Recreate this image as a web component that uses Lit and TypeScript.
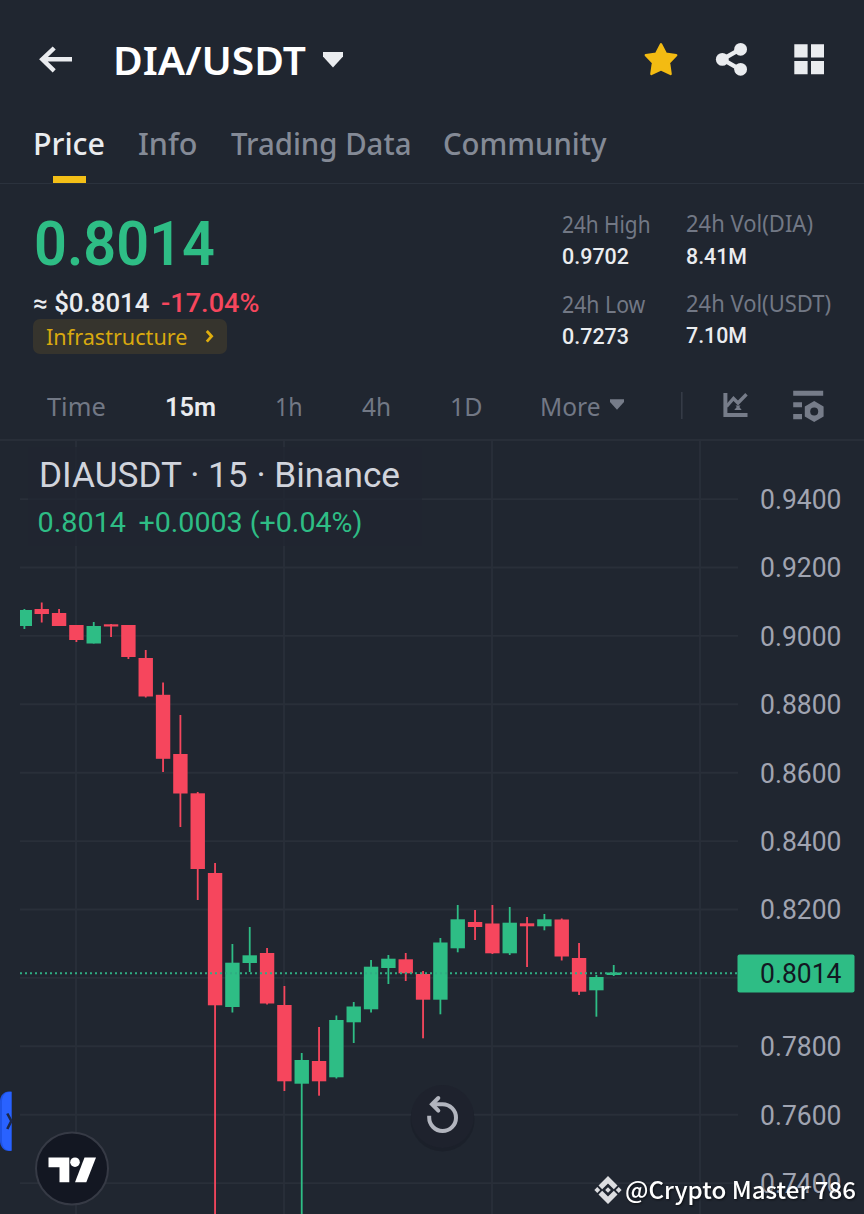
import { LitElement, html, svg, css } from "lit";
import { customElement, property } from "lit/decorators.js";

/* One line of text set to an exact advance width on a given baseline. */
@customElement("fit-label")
class FitLabel extends LitElement {
  @property() text = "";
  @property({ type: Number }) width = 0;
  @property({ type: Number }) height = 0;
  @property({ type: Number }) baseline = 0;

  static styles = css`
    :host { display: block; }
    svg { display: block; overflow: visible; }
    text { fill: currentColor; white-space: pre; }
  `;

  render() {
    return html`<svg width=${this.width} height=${this.height}>
      <text x="0" y=${this.baseline} textLength=${this.width} lengthAdjust="spacingAndGlyphs">${this.text}</text>
    </svg>`;
  }
}

const label = (cls: string, text: string, width: number, height: number, baseline: number) =>
  html`<fit-label class=${cls} .text=${text} .width=${width} .height=${height} .baseline=${baseline}></fit-label>`;

/* body top, body bottom, wick top, wick bottom, rising */
type Candle = [number, number, number, number, 0 | 1];
const CANDLES: Candle[] = [
  [610, 626, 609, 629, 1], [609, 614, 602.5, 622.5, 0], [613, 626, 609, 626, 0],
  [625, 640, 625, 642, 0], [626, 643.5, 622, 643.5, 1], [624.3, 626.5, 624, 637, 0],
  [625, 657, 625, 659, 0], [658, 696.5, 650, 697.5, 0], [694.8, 758.8, 682.5, 772, 0],
  [754, 793.5, 715, 827, 0], [793.3, 869, 792, 900, 0], [873, 1005.3, 863, 1214, 0],
  [962.7, 1007, 944, 1012.5, 1], [955.3, 963, 927, 972, 1], [953, 1003.5, 948, 1004.5, 0],
  [1005, 1081.3, 986, 1091, 0], [1060, 1083.7, 1053, 1214, 1], [1061, 1081.3, 1027, 1095.7, 0],
  [1020, 1077.3, 1015.5, 1078.5, 1], [1006.5, 1022.3, 1002, 1043, 1], [966.7, 1009.3, 960, 1012.5, 1],
  [958.7, 968, 955, 984, 1], [959.3, 973.3, 953, 981, 0], [974, 999.7, 971, 1038.3, 0],
  [942.5, 999.7, 938, 1014.3, 1], [919.3, 948.3, 905, 952.3, 1], [922, 927, 910, 940, 0],
  [923.5, 953.3, 905, 954, 0], [922.7, 953.3, 907, 955, 1], [923.3, 926.3, 917, 967, 0],
  [919.3, 926.3, 914, 930.3, 1], [919.5, 956.5, 918.5, 960.5, 0], [958, 991.7, 943, 995, 0],
  [977, 990.3, 975, 1016.7, 1], [972.5, 975, 965, 976, 1],
];
const STEP = 17.333;
const FIRST_X = 24.4;
const GRID_TOP = 499.1;
const GRID_STEP = 68.4;
const VERTICALS = [76, 284, 492, 700];
const PRICES = ["0.9400", "0.9200", "0.9000", "0.8800", "0.8600", "0.8400", "0.8200", "", "0.7800", "0.7600", "0.7400"];

@customElement("price-chart")
class PriceChart extends LitElement {
  static styles = css`
    :host { display: block; }
    svg { display: block; }
    text { font-family: Roboto, sans-serif; white-space: pre; }
    .grid { stroke: #292f39; stroke-width: 1.9; }
    .legend-bg { fill: #202630; opacity: 0.72; }
    .up { fill: #2ebd85; }
    .down { fill: #f6465d; }
    .last { stroke: #2fae82; stroke-width: 2; stroke-dasharray: 2 3; }
    .axis { font-size: 27px; fill: #a0a4b1; }
    .symbol { font-size: 35.5px; fill: #d1d4dc; }
    .change { font-size: 27.4px; fill: #2ebd85; }
    .tag { fill: #2ebd85; }
    .tag-text { font-size: 27px; fill: #131722; }
    .tv { fill: #131722; stroke: #363a45; stroke-width: 2; }
    .white { fill: #fff; }
    .reset-shadow { fill: #161a24; opacity: 0.45; }
    .reset { fill: #1e222d; }
    .reset-icon { fill: none; stroke: #b2b5be; stroke-width: 4; }
    .round { stroke-linecap: round; }
    .handle { fill: #2962ff; }
    .handle-edge { fill: #1e53e5; }
    .handle-icon { fill: none; stroke: #1c2748; stroke-width: 2.6; }
    .mark { fill: #dcdde0; }
    .watermark { font-family: "Noto Sans CJK SC", sans-serif; font-weight: 500; font-size: 23.6px; fill: #fff; filter: drop-shadow(1px 1px 1px rgba(0, 0, 0, 0.6)); }
  `;

  private candle([top, bottom, high, low, rising]: Candle, i: number) {
    const x = FIRST_X + i * STEP;
    const left = i === 0 ? 20 : x - 7.2;
    return svg`<g class=${rising ? "up" : "down"}>
      <rect x=${x - 0.9} y=${high} width="1.8" height=${low - high}></rect>
      <rect x=${left} y=${top} width=${x + 7.2 + (i === 0 ? 0.4 : 0) - left} height=${bottom - top}></rect>
    </g>`;
  }

  render() {
    return html`<svg width="864" height="775" viewBox="0 439 864 775">
      ${PRICES.map((_, i) => svg`<line class="grid" x1="20" x2="738" y1=${GRID_TOP + i * GRID_STEP} y2=${GRID_TOP + i * GRID_STEP}></line>`)}
      ${VERTICALS.map((x) => svg`<line class="grid" x1=${x} x2=${x} y1="439" y2="1214"></line>`)}
      <rect class="legend-bg" x="28" y="447" width="394" height="99"></rect>
      ${CANDLES.map((c, i) => this.candle(c, i))}
      <line class="last" x1="20" x2="738" y1="973.2" y2="973.2"></line>

      <text class="symbol" x="39" y="487.2" textLength="361" lengthAdjust="spacingAndGlyphs">DIAUSDT · 15 · Binance</text>
      <text class="change" x="37.5" y="532.3" textLength="88.5" lengthAdjust="spacingAndGlyphs">0.8014</text>
      <text class="change" x="138.5" y="532.3" textLength="224" lengthAdjust="spacingAndGlyphs">+0.0003 (+0.04%)</text>

      ${PRICES.map((p, i) => p
        ? svg`<text class="axis" x="760" y=${509 + i * GRID_STEP} textLength="81.5" lengthAdjust="spacingAndGlyphs">${p}</text>`
        : "")}
      <rect class="tag" x="737.5" y="954.5" width="117" height="38" rx="2"></rect>
      <text class="tag-text" x="760" y="983.2" textLength="81.5" lengthAdjust="spacingAndGlyphs">0.8014</text>

      <circle class="reset-shadow" cx="442.5" cy="1119.5" r="32"></circle>
      <circle class="reset" cx="442.5" cy="1116.5" r="31.5"></circle>
      <path class="reset-icon" d="M429.2 1115.8V1117.5A13.4 13.4 0 1 0 442.6 1104.2H434"></path>
      <path class="reset-icon round" d="M438.3 1098L432 1104.2L438.3 1110.6"></path>

      <circle class="tv" cx="72" cy="1168.5" r="36"></circle>
      <path class="white" d="M48.5 1157.5H69.3V1182.2H59.5V1167.3H48.5Z"></path>
      <circle class="white" cx="75" cy="1162.2" r="4.8"></circle>
      <path class="white" d="M84.5 1157.5H96L86.3 1182.2H75Z"></path>

      <path class="handle-edge" d="M11.5 1091.5H9C3.5 1091.5 0 1096 0 1101V1141C0 1146 3.5 1151 9 1151H11.5Z"></path>
      <path class="handle" d="M11.5 1092H9.5C5 1092 2 1096 2 1101V1141C2 1146 5 1150.5 9.5 1150.5H11.5Z"></path>
      <path class="handle-icon" d="M7.3 1113.5L11.3 1121L7.3 1129"></path>

      <g class="mark">
        <path d="M608 1176L617.5 1185.5L613.8 1189.2L608 1183.4L602.2 1189.2L598.5 1185.5Z"></path>
        <path d="M608 1204L617.5 1194.5L613.8 1190.8L608 1196.6L602.2 1190.8L598.5 1194.5Z"></path>
        <path d="M608 1187.2L610.8 1190L608 1192.8L605.2 1190Z"></path>
        <path d="M597.3 1187.1L600.2 1190L597.3 1192.9L594.4 1190Z"></path>
        <path d="M618.7 1187.1L621.6 1190L618.7 1192.9L615.8 1190Z"></path>
      </g>
      <text class="watermark" x="625" y="1199" textLength="231" lengthAdjust="spacingAndGlyphs">@Crypto Master 786</text>
    </svg>`;
  }
}

@customElement("app-root")
class AppRoot extends LitElement {
  static styles = css`
    :host {
      display: flex;
      flex-direction: column;
      width: 864px;
      height: 1214px;
      overflow: hidden;
      background: #202630;
      color: #eaecef;
      font-family: "Noto Sans", sans-serif;
    }
    svg { display: block; }
    .header { height: 120px; display: grid; grid-template-columns: 37px 76px 208px 322px 71px 77px 1fr; }
    .title { font-size: 39.6px; font-weight: 600; color: #fff; }
    .light { fill: #eaecef; }
    .star { fill: #f3bb12; stroke: #f3bb12; stroke-width: 2.4; stroke-linejoin: round; }
    .line-light { fill: none; stroke: #eaecef; stroke-width: 4.4; }
    .tabs { height: 63px; padding-left: 33px; display: flex; border-bottom: 1px solid #2b323d; font-size: 30.3px; font-weight: 500; color: #848a96; }
    .tab { display: flex; flex-direction: column; align-items: center; margin-right: 33px; }
    .tab.wide { margin-right: 32px; }
    .active { color: #eaecef; }
    .underline { width: 33px; height: 7px; background: #f3bf17; }
    .summary { height: 190px; box-sizing: border-box; padding-left: 33px; display: grid; grid-template-columns: 529px 124px 1fr; }
    .price { margin-left: 1px; font-family: Roboto, sans-serif; font-size: 61px; font-weight: 600; color: #2ebd85; }
    .sub { display: flex; gap: 11px; font-family: Roboto, sans-serif; font-size: 25.4px; font-weight: 500; }
    .drop { color: #f6465d; }
    .chip { display: flex; width: 194px; height: 35px; box-sizing: border-box; padding-left: 13px; gap: 17.5px; border-radius: 7px; background: #36342d; color: #d9a90f; font-size: 22px; }
    .chip-arrow { fill: none; stroke: #e0ae0e; stroke-width: 2.8; }
    .key { font-size: 22.8px; color: #727885; }
    .value { font-family: Roboto, sans-serif; font-size: 22.6px; font-weight: 500; color: #eaecef; }
    .intervals { height: 65px; padding-left: 46.5px; display: grid; grid-template-columns: 118.5px 110px 86.5px 88.5px 89.5px 69px 71px 42.5px 69.5px 1fr; border-bottom: 2px solid #282e38; margin-bottom: -2px; font-size: 25.6px; color: #727885; }
    .num { font-family: Roboto, sans-serif; }
    .current { color: #eaecef; font-weight: 600; }
    .muted { fill: #767c89; }
    .cut { fill: #202630; }
    .line-muted { fill: none; stroke: #767c89; stroke-width: 4; }
    .line-thin { fill: none; stroke: #767c89; stroke-width: 3.4; }
    .divider { fill: #353b46; }
  `;

  private stats(high: string, highW: number, hv: string, hvW: number, low: string, lowW: number, lv: string, lvW: number, shift: number) {
    return html`<div>
      ${label("key", high, highW, 51, 48.7 - shift)}
      ${label("value", hv, hvW, 31, 29 - shift / 2)}
      ${label("key", low, lowW, 49, 46.7 - shift / 2)}
      ${label("value", lv, lvW, 31, 28.8 - shift / 2)}
    </div>`;
  }

  render() {
    return html`
      <header class="header">
        <span></span>
        <svg width="40" height="120"><path class="line-light" d="M35 59.3H5M17.2 48L5.3 59.3L17.2 70.8"></path></svg>
        ${label("title", "DIA/USDT", 193, 120, 75.3)}
        <svg width="30" height="120"><path class="light" d="M2 52H22V56.5L12 67.5L2 56.5Z"></path></svg>
        <svg width="36" height="120"><path class="star" d="M18 44.2L22.8 53.6L33.2 55.2L26 62.7L27.6 74L18 69.4L8.4 74L10 62.7L2.8 55.2L13.2 53.6Z"></path></svg>
        <svg width="36" height="120">
          <path class="line-light" d="M26 49.4L8.5 59.3L26 69.4"></path>
          <circle class="light" cx="8.3" cy="59.4" r="6.4"></circle>
          <circle class="light" cx="26.6" cy="49.3" r="6.4"></circle>
          <circle class="light" cx="26.6" cy="69.3" r="6.4"></circle>
        </svg>
        <svg width="40" height="120"><path class="light" d="M3.3 44.3H16.6V57.6H3.3ZM20 44.3H33V57.6H20ZM3.3 61H16.6V74.2H3.3ZM20 61H33V74.2H20Z"></path></svg>
      </header>

      <nav class="tabs">
        <div class="tab active">${label("", "Price", 72, 56, 34.8)}<div class="underline"></div></div>
        <div class="tab">${label("", "Info", 59.5, 56, 34.8)}</div>
        <div class="tab wide">${label("", "Trading Data", 180.5, 56, 34.8)}</div>
        <div class="tab">${label("", "Community", 163.5, 56, 34.8)}</div>
      </nav>

      <section class="summary">
        <div>
          ${label("price", "0.8014", 181, 90, 80.7)}
          <div class="sub">
            ${label("", "≈ $0.8014", 116.5, 45, 37.7)}
            ${label("drop", "-17.04%", 98.5, 45, 37.7)}
          </div>
          <div class="chip">
            ${label("", "Infrastructure", 141.5, 35, 25.6)}
            <svg width="14" height="35"><path class="chip-arrow" d="M1.8 12L6.6 17.3L1.8 22.6"></path></svg>
          </div>
        </div>
        ${this.stats("24h High", 88.5, "0.9702", 67, "24h Low", 83.3, "0.7273", 67, 0)}
        ${this.stats("24h Vol(DIA)", 127, "8.41M", 61, "24h Vol(USDT)", 145, "7.10M", 61, 1)}
      </section>

      <nav class="intervals">
        ${label("", "Time", 58.7, 65, 41.9)}
        ${label("num current", "15m", 51, 65, 42.2)}
        ${label("", "1h", 27.7, 65, 41.9)}
        ${label("", "4h", 29, 65, 41.9)}
        ${label("", "1D", 32.5, 65, 41.9)}
        ${label("", "More", 60.5, 65, 41.9)}
        <svg width="20" height="65"><path class="muted" d="M1 25.2H15V28L8 35.7L1 28Z"></path></svg>
        <svg width="4" height="65"><rect class="divider" x="1" y="18" width="1.6" height="27"></rect></svg>
        <svg width="30" height="65">
          <path class="line-muted" d="M3.4 19V41H25.5"></path>
          <path class="line-thin" d="M4.5 32.5L11.5 24.5L16 29L24.5 20.3"></path>
          <path class="muted" d="M13.5 31.5H18.5L17.3 33L19.7 36H12.2L14.8 33Z"></path>
        </svg>
        <svg width="36" height="65">
          <path class="muted" d="M1.2 16.7H31.2V21.7H1.2ZM1.2 28.3H10V33.3H1.2ZM1.2 40H10V45.3H1.2Z"></path>
          <path class="muted" d="M22.2 27L31.6 32.4V42.6L22.2 48L12.8 42.6V32.4Z"></path>
          <circle class="cut" cx="22.2" cy="37.5" r="4"></circle>
        </svg>
      </nav>

      <price-chart></price-chart>
    `;
  }
}
